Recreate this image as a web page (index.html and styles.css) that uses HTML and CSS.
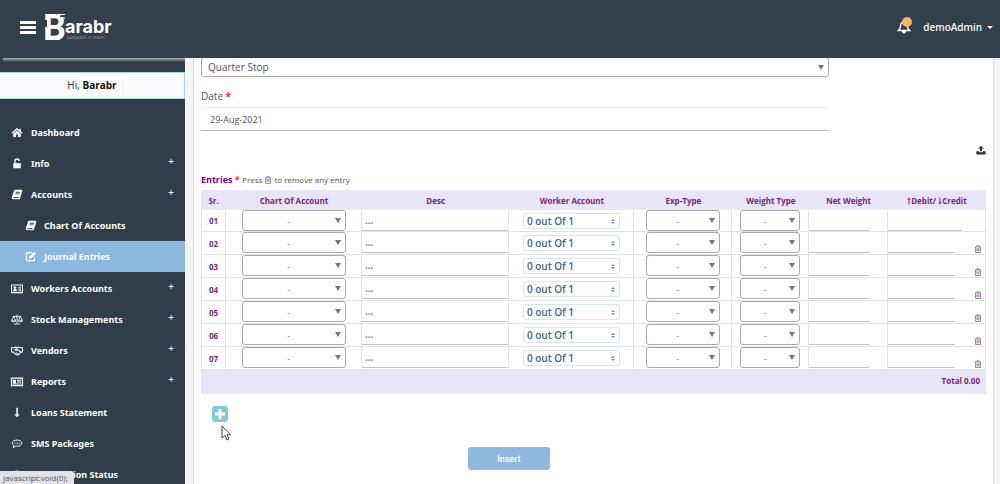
FILE: index.html
```
<!DOCTYPE html>
<html lang="en">
<head>
    <meta charset="UTF-8">
    <meta name="viewport" content="width=device-width, initial-scale=1.0">
    <title>Journal Entries</title>
    <link rel="stylesheet" href="styles.css">
</head>
<body>
    <!-- Icon set -->
    <svg class="sprite" aria-hidden="true">
        <symbol id="home" viewBox="0 0 16 16"><path d="M8 1.500 0 8.500l1.200 1.300L8 4l6.800 5.800L16 8.500l-2.500-2.200V2.500h-2v2z"/><path d="M8 5 2.500 9.700V14.500h4v-3.500h3v3.500h4V9.700z"/></symbol>
        <symbol id="lock" viewBox="0 0 16 16"><path d="M2.500 7.500h11V15h-11z"/><path d="M5 8V4.500a3 3 0 0 1 6 0" fill="none" stroke="currentColor" stroke-width="2"/></symbol>
        <symbol id="book" viewBox="0 0 16 16"><path fill-rule="evenodd" d="M5 1h10q1 .5.600 2l-3 10q-.500 2-2 2H2q-2-1-1.500-3L3.500 2.500Q4 1 5 1zM6.500 4 6 5.300h6.500L13 4zM5.700 6.500l-.500 1.300h6.500l.500-1.300zM2.500 12q-.500 1.500.500 1.500h7l.6-1.500z"/></symbol>
        <symbol id="edit" viewBox="0 0 16 16"><path d="M13 9v5H1.500V2.500H10" fill="none" stroke="currentColor" stroke-width="1.500"/><path d="m5 9 7-7.500L15 4 8 11H5z"/></symbol>
        <symbol id="card" viewBox="0 0 18 16"><path d="M1 3h16v11H1z" fill="none" stroke="currentColor" stroke-width="1.500"/><circle cx="6" cy="6.700" r="2"/><path d="M3 12q0-3.500 3-3.500T9 12zM11 5.500h4V7h-4zM11 8h4v1.300h-4zM11 10.500h4V12h-4z"/></symbol>
        <symbol id="scale" viewBox="0 0 18 16"><path d="M9 1v13M5 14.500h8M3 3.500h12M4 3.500 1 10h6zM14 3.500 11 10h6zM1 10q3 3 6 0M11 10q3 3 6 0" fill="none" stroke="currentColor" stroke-width="1.300"/></symbol>
        <symbol id="handshake" viewBox="0 0 18 16"><path d="M1 4h3l3-1 2 1 2-1 3 1h3v6h-2l-4 4H8l-5-4H1zM9 4 6 7q1 2 3 0l1-.5 4 4M8 11l2 1.500" fill="none" stroke="currentColor" stroke-width="1.500"/></symbol>
        <symbol id="news" viewBox="0 0 18 16"><path d="M1 3h16v11H1z" fill="none" stroke="currentColor" stroke-width="1.800"/><path d="M3 5.500h4.500v5H3zM9 5.500h6v1.300H9zM9 8h6v1.300H9zM3 11h12v1.300H3z"/></symbol>
        <symbol id="down" viewBox="0 0 16 16"><path d="M7 1h2.200v9.500H12L8 15l-4-4.500h3z"/></symbol>
        <symbol id="long-up" viewBox="0 0 8 16"><path d="M3 15h2V5h2.500L4 1 .5 5H3z"/></symbol>
        <symbol id="long-down" viewBox="0 0 8 16"><path d="M3 1h2v10h2.500L4 15 .5 11H3z"/></symbol>
        <symbol id="chat" viewBox="0 0 16 16"><path d="M8 3c4 0 7 2 7 4.500S12 12 8 12q-1 0-2-.2L2.500 14l.7-3.200Q1 9.500 1 7.500C1 5 4 3 8 3z" fill="none" stroke="currentColor" stroke-width="1.400"/><path d="M4.200 6.800h1.600v1.500H4.200zM7.200 6.800h1.600v1.500H7.200zM10.200 6.800h1.600v1.500h-1.600z"/></symbol>
        <symbol id="bell" viewBox="0 0 16 16"><path d="M8 2Q4 2.500 4 7q0 3-2.500 5h13Q12 10 12 7 12 2.500 8 2z" fill="none" stroke="currentColor" stroke-width="1.600"/><path d="M5.700 12.500h4.600Q10 15.500 8 15.500t-2.300-3z"/></symbol>
        <symbol id="trash" viewBox="0 0 16 16"><path d="M1.500 4h13M5.500 4V1.500h5V4M3 4v11h10V4M6 6.500v6M8 6.500v6M10 6.500v6" fill="none" stroke="currentColor" stroke-width="1.500"/></symbol>
        <symbol id="upload" viewBox="0 0 16 16"><path d="M8 1 3.500 6H6.500v4h3V6h3z"/><path d="M0.500 10H5v1.500h6V10h4.500v5H.500z"/></symbol>
        <symbol id="plus" viewBox="0 0 16 16"><path d="M6.500 3h3v3.500H13v3H9.500V13h-3V9.500H3v-3h3.500z"/></symbol>
    </svg>

    <header class="topbar">
        <button class="menu-toggle" aria-label="Toggle menu"><span></span><span></span><span></span></button>
        <a href="#" class="logo" aria-label="Barabr">
            <svg width="72" height="54" viewBox="0 0 72 54">
                <text class="logo-b" x="0" y="40">B</text>
                <!-- plug prongs and the notch in the stem -->
                <path class="logo-notch" d="M0 20h4v7H0zM16 12h6v1.500h-6zM17 15.500h5V17h-5z"/>
                <path d="M15 14.500h7M16 18h6" stroke="#fff"/>
                <text class="logo-name" x="22" y="33">arabr</text>
                <text class="logo-tag" x="24" y="39">BARABARY IS SMART</text>
            </svg>
        </a>
        <div class="user">
            <button class="bell" aria-label="Notifications"><svg><use href="#bell"/></svg><span class="badge"></span></button>
            <button class="user-name">demoAdmin <span class="caret"></span></button>
        </div>
    </header>

    <div class="layout">
        <nav class="sidebar">
            <div class="hello">Hi, <b>Barabr</b></div>
            <ul class="menu">
                <li><a href="#"><svg><use href="#home"/></svg>Dashboard</a></li>
                <li><a href="#"><svg><use href="#lock"/></svg>Info<span class="more">+</span></a></li>
                <li><a href="#"><svg><use href="#book"/></svg>Accounts<span class="more">+</span></a>
                    <ul class="submenu">
                        <li><a href="#"><svg><use href="#book"/></svg>Chart Of Accounts</a></li>
                        <li><a href="#" class="active"><svg><use href="#edit"/></svg>Journal Entries</a></li>
                    </ul>
                </li>
                <li><a href="#"><svg><use href="#card"/></svg>Workers Accounts<span class="more">+</span></a></li>
                <li><a href="#"><svg><use href="#scale"/></svg>Stock Managements<span class="more">+</span></a></li>
                <li><a href="#"><svg><use href="#handshake"/></svg>Vendors<span class="more">+</span></a></li>
                <li><a href="#"><svg><use href="#news"/></svg>Reports<span class="more">+</span></a></li>
                <li><a href="#"><svg><use href="#down"/></svg>Loans Statement</a></li>
                <li><a href="#"><svg><use href="#chat"/></svg>SMS Packages</a></li>
                <li><a href="#"><svg><use href="#chat"/></svg>Subscription Status</a></li>
            </ul>
        </nav>

        <main class="panel">
            <div class="select stop">
                <select aria-label="Stop"><option>Quarter Stop</option></select>
            </div>

            <label class="label" for="date">Date <i>*</i></label>
            <input class="date" id="date" type="text" value="29-Aug-2021">

            <div class="tools">
                <button class="icon-button" aria-label="Upload"><svg><use href="#upload"/></svg></button>
            </div>

            <div class="entries-title">
                <b>Entries</b> <i>*</i>
                <small>Press <svg><use href="#trash"/></svg> to remove any entry</small>
            </div>

            <table class="entries">
                <colgroup>
                    <col class="col-sr"><col class="col-chart"><col class="col-desc"><col class="col-worker">
                    <col class="col-exp"><col class="col-type"><col class="col-weight"><col class="col-amount">
                </colgroup>
                <thead>
                    <tr>
                        <th>Sr.</th>
                        <th>Chart Of Account</th>
                        <th>Desc</th>
                        <th>Worker Account</th>
                        <th>Exp-Type</th>
                        <th>Weight Type</th>
                        <th>Net Weight</th>
                        <th><svg><use href="#long-up"/></svg>Debit/ <svg><use href="#long-down"/></svg>Credit</th>
                    </tr>
                </thead>
                <tbody id="rows"></tbody>
                <tfoot>
                    <tr><td colspan="8">Total 0.00</td></tr>
                </tfoot>
            </table>

            <button class="add" id="add" aria-label="Add entry"><svg><use href="#plus"/></svg></button>
            <button class="insert">Insert</button>
        </main>
    </div>

    <div class="status">javascript:void(0);</div>
    <svg class="pointer" viewBox="0 0 10 16"><path d="M1 1v12l3-2.500 2 4.500 2-1-2-4.200h3.500z"/></svg>

    <script>
        const rows = document.getElementById('rows');

        function addRow() {
            const number = String(rows.children.length + 1).padStart(2, '0');
            const row = document.createElement('tr');
            // The first entry can not be removed
            const remove = number === '01' ? '' :
                '<button class="icon-button remove" aria-label="Remove entry"><svg><use href="#trash"/></svg></button>';

            row.innerHTML = `
                <td class="sr">${number}</td>
                <td><div class="select chart"><select aria-label="Chart of account"><option>-</option></select></div></td>
                <td><input class="line" type="text" placeholder="..." aria-label="Desc"></td>
                <td><div class="worker"><select aria-label="Worker account"><option>0 out Of 1</option></select></div></td>
                <td><div class="select exp"><select aria-label="Exp-type"><option>-</option></select></div></td>
                <td><div class="select type"><select aria-label="Weight type"><option>-</option></select></div></td>
                <td><input class="line weight" type="text" aria-label="Net weight"></td>
                <td><div class="amount"><input class="line" type="text" aria-label="Debit or credit">${remove}</div></td>
            `;
            rows.appendChild(row);
        }

        for (let i = 0; i < 7; i++) {
            addRow();
        }

        document.getElementById('add').addEventListener('click', addRow);
        rows.addEventListener('click', e => {
            if (e.target.closest('.remove')) {
                e.target.closest('tr').remove();
            }
        });
    </script>
</body>
</html>
```
FILE: styles.css
```
* {
    box-sizing: border-box;
}

body {
    margin: 0;
    height: 100vh;
    overflow: hidden;
    display: flex;
    flex-direction: column;
    background: #f4f4f5;
    color: #555;
    font-family: "Open Sans", sans-serif;
    font-size: 10px;
}

button, input, select {
    font-family: inherit;
    font-size: inherit;
    color: inherit;
    margin: 0;
    padding: 0;
    border: 0;
    background: none;
    outline: none;
}

button {
    cursor: pointer;
}

select {
    appearance: none;
}

svg {
    fill: currentColor;
}

i {
    color: #e33;
    font-style: normal;
    font-weight: bold;
}

.sprite {
    display: none;
}

/* Top bar */
.topbar {
    flex: none;
    display: flex;
    align-items: center;
    height: 58px;
    padding: 0 7px 4px 20px;
    background: #333f4d;
    color: #fff;
    z-index: 2;
}

.menu-toggle {
    display: grid;
    gap: 2px;
    width: 16px;
}

.menu-toggle span {
    height: 3px;
    background: #fff;
}

.logo {
    margin-left: 7px;
    color: #fff;
}

.logo svg {
    display: block;
}

.logo-b {
    font: 700 36px Roboto, sans-serif;
}

.logo-name {
    font: 700 18px Inter, sans-serif;
}

.logo-tag {
    font: 4px "Open Sans", sans-serif;
    fill: #8b949e;
}

.logo-notch {
    fill: #333f4d;
}

.user {
    display: flex;
    align-items: center;
    gap: 12px;
    margin-left: auto;
}

.bell {
    position: relative;
    height: 14px;
}

.bell svg {
    display: block;
    width: 14px;
    height: 14px;
}

.badge {
    position: absolute;
    top: -3px;
    right: -1px;
    width: 10px;
    height: 10px;
    border-radius: 50%;
    background: #f5b765;
}

.user-name {
    display: flex;
    align-items: center;
    gap: 5px;
    font-family: "Noto Sans", sans-serif;
    font-size: 10px;
    font-weight: 500;
}

.caret {
    border: 3px solid transparent;
    border-top-color: #fff;
    border-bottom: 0;
}

/* Sidebar */
.layout {
    flex: 1;
    display: flex;
    min-height: 0;
}

.sidebar {
    flex: none;
    width: 185px;
    background: #303d4a;
    color: #fff;
    font-weight: bold;
}

.sidebar::before {
    content: "";
    display: block;
    height: 4px;
    margin: 0 0 10px 3px;
    background: linear-gradient(#aab0b6, #303d4a);
}

.hello {
    height: 27px;
    border: 1px solid #a8d5e2;
    border-left: 0;
    background: #fcfcfe;
    color: #333;
    font-weight: normal;
    line-height: 25px;
    text-align: center;
}

.hello b {
    color: #111;
}

.menu, .submenu {
    margin: 0;
    padding: 0;
    list-style: none;
}

.menu {
    padding-top: 18px;
    font-family: "Noto Sans", sans-serif;
    font-size: 9px;
}

.submenu {
    padding-bottom: 1px;
}

.menu a {
    display: flex;
    align-items: center;
    gap: 7px;
    height: 31px;
    padding: 0 11px 0 10px;
    color: inherit;
    text-decoration: none;
}

.menu svg {
    width: 14px;
    height: 11px;
}

.menu .submenu a {
    padding-left: 24px;
    gap: 6px;
}

.menu .active {
    background: #8cb8dd;
}

.more {
    margin-left: auto;
    padding-bottom: 5px;
    font-size: 10px;
    font-weight: normal;
}

/* Form */
.panel {
    flex: 1;
    margin: -2px 6px 0 8px;
    padding: 0 7px;
    border: 1px solid #ddd;
    border-bottom: 0;
    background: #fff;
}

.select {
    position: relative;
    height: 21px;
}

.select select {
    display: block;
    width: 100%;
    height: 100%;
    padding-right: 10px;
    border: 1px solid #aaa;
    border-radius: 3px;
    background: #fff;
    text-align-last: center;
}

.select::after {
    content: "";
    position: absolute;
    top: 8px;
    right: 5px;
    border: 3px solid transparent;
    border-top: 5px solid #777;
    border-bottom: 0;
    pointer-events: none;
}

.stop {
    width: 80%;
    height: 20px;
}

.stop select {
    padding-left: 6px;
    text-align-last: left;
}

.label {
    display: block;
    padding: 12px 0 4px;
    line-height: 14px;
}

.date {
    display: block;
    width: 80%;
    height: 24px;
    padding-left: 9px;
    border-top: 1px solid #f0f0f0;
    border-bottom: 1px solid #bbb;
    font-size: 9px;
}

.tools {
    display: flex;
    justify-content: flex-end;
    padding-top: 14px;
    color: #333;
}

.icon-button svg {
    display: block;
    width: 10px;
    height: 10px;
}

.entries-title {
    padding: 17px 0 2px;
    color: #800080;
    font-size: 9px;
    line-height: 16px;
}

.entries-title small {
    color: #555;
    font-size: 8px;
}

.entries-title svg {
    width: 8px;
    height: 8px;
    color: #8a5f90;
    vertical-align: -1px;
}

/* Entries table */
.entries {
    width: 100%;
    table-layout: fixed;
    border-spacing: 0;
    color: #7b2480;
    font-size: 8px;
}

.col-sr { width: 3.2%; }
.col-chart { width: 17.3%; }
.col-desc { width: 18.8%; }
.col-worker { width: 15.9%; }
.col-exp { width: 12.5%; }
.col-type { width: 9.8%; }
.col-weight { width: 10%; }
.col-amount { width: 12.5%; }

.entries th {
    height: 20px;
    padding: 0;
    background: #e8e5f8;
    font-weight: bold;
}

.entries th svg {
    width: 4px;
    height: 8px;
    vertical-align: -1px;
}

.entries tbody td {
    height: 23px;
    padding: 0;
    border-right: 1px solid #e3e3e3;
    border-bottom: 1px solid #e3e3e3;
    vertical-align: top;
}

.entries tbody tr:first-child td {
    height: 22px;
}

.entries tbody .sr {
    border-left: 1px solid #e3e3e3;
    font-weight: bold;
    text-align: center;
    vertical-align: middle;
}

.entries tfoot td {
    height: 24px;
    padding: 0 6px 4px 0;
    background: #e8e5f8;
    font-weight: bold;
    text-align: right;
}

.entries .select {
    margin: 0 auto;
    color: #555;
}

.chart { width: 104px; }
.exp { width: 74px; }
.type { width: 60px; }

.worker {
    position: relative;
    width: 97px;
    margin: 3px auto 0;
    color: #3f6592;
}

.worker select {
    display: block;
    width: 100%;
    height: 16px;
    padding: 0 0 2px 3px;
    border: 1px solid #d6e4ef;
    border-radius: 3px;
    font-size: 10px;
    font-weight: 600;
}

.worker::before, .worker::after {
    content: "";
    position: absolute;
    right: 5px;
    border: 2px solid transparent;
    pointer-events: none;
}

.worker::before {
    top: 6px;
    border-top: 0;
    border-bottom-color: #6a8fb5;
}

.worker::after {
    top: 9px;
    border-bottom: 0;
    border-top-color: #6a8fb5;
}

.line {
    display: block;
    width: 100%;
    height: 21px;
    padding-left: 3px;
    border-bottom: 1px solid #c4c4c4;
}

.line::placeholder {
    color: #888;
    font-size: 10px;
    font-weight: bold;
}

.weight {
    width: 60px;
}

.amount {
    display: flex;
    align-items: flex-end;
    justify-content: space-between;
    padding-right: 3px;
}

.amount .line {
    width: 67px;
}

tr:first-child .amount .line {
    width: 74px;
}

.remove {
    color: #8a5f90;
}

.remove svg {
    width: 8px;
    height: 8px;
}

/* Actions */
.add {
    display: block;
    margin: 12px 0 0 11px;
    border-radius: 3px;
    background: #86c9df;
    color: #fff;
}

.add svg {
    display: block;
    width: 16px;
    height: 16px;
}

.insert {
    display: block;
    width: 82px;
    height: 23px;
    margin: 25px 0 0 34%;
    border-radius: 3px;
    background: #8fb9dc;
    color: #fff;
    font-family: Roboto, sans-serif;
    font-size: 9px;
    font-weight: 500;
}

.status {
    position: fixed;
    left: 0;
    bottom: 0;
    padding: 0 6px 0 3px;
    border-radius: 0 3px 0 0;
    background: #dfe2e6;
    color: #555;
    font-size: 8px;
    line-height: 13px;
    z-index: 3;
}

.pointer {
    position: fixed;
    top: 425px;
    left: 221px;
    width: 10px;
    height: 16px;
    fill: #fff;
    stroke: #444;
}
```
